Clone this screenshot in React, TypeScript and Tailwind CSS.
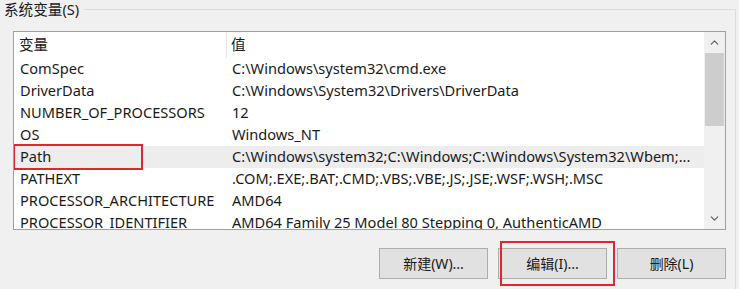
import { ChevronDown, ChevronUp } from "lucide-react";

const rows: [string, string][] = [
  ["ComSpec", "C:\\Windows\\system32\\cmd.exe"],
  ["DriverData", "C:\\Windows\\System32\\Drivers\\DriverData"],
  ["NUMBER_OF_PROCESSORS", "12"],
  ["OS", "Windows_NT"],
  ["Path", "C:\\Windows\\system32;C:\\Windows;C:\\Windows\\System32\\Wbem;..."],
  ["PATHEXT", ".COM;.EXE;.BAT;.CMD;.VBS;.VBE;.JS;.JSE;.WSF;.WSH;.MSC"],
  ["PROCESSOR_ARCHITECTURE", "AMD64"],
  ["PROCESSOR_IDENTIFIER", "AMD64 Family 25 Model 80 Stepping 0, AuthenticAMD"],
];

const font = "font-['Noto_Sans','Noto_Sans_CJK_SC',sans-serif]";

const Button = ({ label, marked }: { label: string; marked?: boolean }) => (
  <div className="relative">
    <button className="flex h-[31px] w-[109px] items-center justify-center border border-[#adadad] bg-[#e1e1e1] text-[14px] text-[#1a1a1a]">
      {label}
    </button>
    {marked && (
      <div className="absolute -top-[7px] left-[2px] h-[45px] w-[115px] border-2 border-[#e0262e]" />
    )}
  </div>
);

export default function App() {
  return (
    <div className={`h-[289px] w-[739px] overflow-hidden bg-[#f0f0f0] ${font} text-[14.6px] text-[#1a1a1a]`}>
      <div className="relative mt-[9px] mr-[3px] border-t border-r border-[#dcdcdc] pt-[21px] pl-[13px] pr-[9px]">
        <span className="absolute -top-[10px] left-0 bg-[#f0f0f0] pl-[4px] pr-[5px] leading-[18px]">系统变量(S)</span>

        {/* list view */}
        <div className="flex h-[199px] w-[713px] border border-[#a0a0a0] bg-white">
          <div className="flex-1 overflow-hidden">
            <div className="flex h-[26px] items-center">
              <div className="flex h-full w-[213px] items-center border-r border-[#e5e5e5] pl-[5px]">变量</div>
              <div className="pl-[4px]">值</div>
            </div>
            {rows.map(([name, value]) => (
              <div
                key={name}
                className={`relative flex h-[22px] items-center whitespace-nowrap ${name === "Path" ? "bg-[#ededed]" : ""}`}
              >
                <div className="w-[214px] pl-[6px]">{name}</div>
                <div className="pl-[4px]">{value}</div>
                {name === "Path" && (
                  <div className="absolute -top-[2px] -left-[1px] h-[26px] w-[130px] border-2 border-[#e0262e]" />
                )}
              </div>
            ))}
          </div>

          {/* scrollbar */}
          <div className="flex w-[21px] flex-col bg-[#f0f0f0]">
            <div className="flex h-[21px] items-center justify-center text-[#606060]">
              <ChevronUp size={13} strokeWidth={2.2} />
            </div>
            <div className="mx-[1px] h-[73px] bg-[#cdcdcd]" />
            <div className="flex-1" />
            <div className="flex h-[21px] items-center justify-center text-[#606060]">
              <ChevronDown size={13} strokeWidth={2.2} />
            </div>
          </div>
        </div>

        <div className="mt-[18px] flex justify-end gap-[10px] pb-[10px]">
          <Button label="新建(W)..." />
          <Button label="编辑(I)..." marked />
          <Button label="删除(L)" />
        </div>
      </div>
    </div>
  );
}
